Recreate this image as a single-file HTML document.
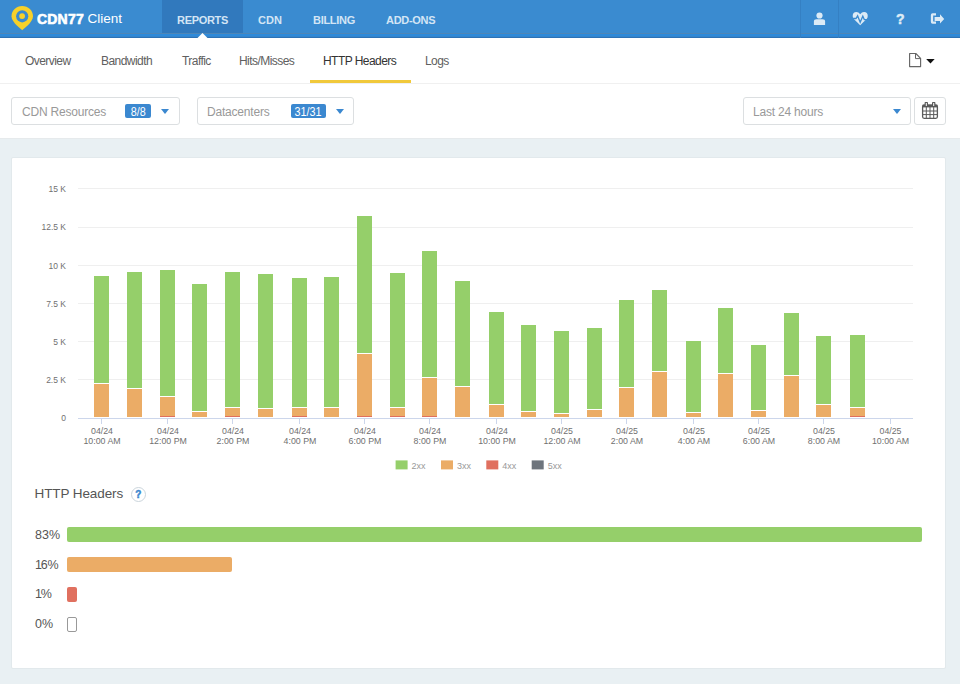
<!DOCTYPE html>
<html><head><meta charset="utf-8">
<style>
*{margin:0;padding:0;box-sizing:border-box}
html,body{width:960px;height:684px;overflow:hidden;background:#e9f0f3;font-family:"Liberation Sans",sans-serif;}
.abs{position:absolute;white-space:nowrap}
#hdr{position:absolute;left:0;top:0;width:960px;height:38px;background:#3a8bd0}
#hdr .l1{position:absolute;left:0;top:33px;width:960px;height:1px;background:#4f86b6}
#hdr .l2{position:absolute;left:0;top:34px;width:960px;height:2px;background:#2e8ada}
#hdr .l3{position:absolute;left:0;top:36px;width:960px;height:1px;background:#3585cc} #hdr .l4{position:absolute;left:0;top:37px;width:960px;height:1px;background:#2c72b6}
.act{position:absolute;left:162px;top:0;width:81px;height:33px;background:#3179bd}
.nav{font-size:11px;font-weight:bold;color:#d3e5f5;letter-spacing:-0.3px;top:13px;line-height:14px}
#sub{position:absolute;left:0;top:38px;width:960px;height:45px;background:#fff}
.tab{font-size:12px;color:#606060;top:54px;line-height:14px;letter-spacing:-0.55px}
#filt{position:absolute;left:0;top:84px;width:960px;height:54px;background:#fff}
.line83{position:absolute;left:0;top:83px;width:960px;height:1px;background:#f0f0f0}
.line138{position:absolute;left:0;top:138px;width:960px;height:1px;background:#e6eaec}
.dd{position:absolute;top:97px;height:28px;border:1px solid #dcdfe1;border-radius:3px;background:#fff}
.ddt{font-size:12px;color:#999;top:105px;line-height:14px;letter-spacing:-0.2px}
.badge{position:absolute;top:104px;height:14px;background:#3b88d0;color:#fff;font-size:12px;line-height:16px;text-align:center;border-radius:2px} .badge span{display:inline-block;transform:scaleX(0.9)}
.caret{position:absolute;width:0;height:0;border-left:4px solid transparent;border-right:4px solid transparent;border-top:5px solid #3b88d0}
#card{position:absolute;left:11px;top:157px;width:935px;height:512px;background:#fff;border:1px solid #e2e9ec;border-radius:2px}
svg text{font-family:"Liberation Sans",sans-serif}
.yl{font-size:8.5px;fill:#707070}
.xl{font-size:8.8px;fill:#707070}
.lg{font-size:9px;fill:#999}
.pct{font-size:12.5px;color:#555;line-height:14px}
.pbar{position:absolute;left:67px;height:15px;border-radius:2px}
</style></head><body>
<div id="hdr"><div class="l1"></div><div class="l2"></div><div class="l3"></div><div class="l4"></div>
<div class="act"></div>
</div>
<svg class="abs" style="left:0;top:0" width="960" height="38">
 <path d="M22.2 6.1 C16.2 6.1 11.5 10.6 11.5 16.6 C11.5 22.5 22.2 30.2 22.2 30.2 C22.2 30.2 33 22.5 33 16.6 C33 10.6 28.2 6.1 22.2 6.1 Z" fill="#f7d12a"/>
 <circle cx="22.2" cy="16.3" r="6.1" fill="#3a8bd0"/>
 <circle cx="22.1" cy="16.1" r="2.9" fill="#f7d12a"/>
 <polygon points="197.5,38 202.5,33 207.5,38" fill="#fff"/>
</svg>
<div class="abs" style="left:37px;top:11px;font-size:14px;font-weight:bold;color:#fff;line-height:16px;-webkit-text-stroke:0.6px #fff;letter-spacing:0.2px">CDN77</div>
<div class="abs" style="left:87.5px;top:11px;font-size:13.5px;color:#fff;line-height:16px">Client</div>
<div class="abs nav" style="left:177px">REPORTS</div>
<div class="abs nav" style="left:258px;letter-spacing:0">CDN</div>
<div class="abs nav" style="left:313px">BILLING</div>
<div class="abs nav" style="left:386px">ADD-ONS</div>

<div id="sub"></div>
<div class="line83"></div>
<div class="abs tab" style="left:25px">Overview</div>
<div class="abs tab" style="left:101px">Bandwidth</div>
<div class="abs tab" style="left:182px">Traffic</div>
<div class="abs tab" style="left:239px">Hits/Misses</div>
<div class="abs tab" style="left:323px;color:#333">HTTP Headers</div>
<div class="abs tab" style="left:425px">Logs</div>
<div class="abs" style="left:310px;top:80px;width:101px;height:3px;background:#f1c93b"></div>

<div id="filt"></div>
<div class="line138"></div>
<div class="dd" style="left:11px;width:169px"></div>
<div class="abs ddt" style="left:22px">CDN Resources</div>
<div class="badge" style="left:125px;width:26px"><span>8/8</span></div>
<div class="caret" style="left:161px;top:109px"></div>
<div class="dd" style="left:197px;width:157px"></div>
<div class="abs ddt" style="left:207px">Datacenters</div>
<div class="badge" style="left:291px;width:35px"><span>31/31</span></div>
<div class="caret" style="left:336px;top:109px"></div>
<div class="dd" style="left:743px;width:168px"></div>
<div class="abs ddt" style="left:753px">Last 24 hours</div>
<div class="caret" style="left:893px;top:109px"></div>
<div class="dd" style="left:914px;width:32px"></div>

<svg class="abs" style="left:0;top:0" width="960" height="140">
 <rect x="800" y="0" width="1" height="38" fill="#3580c3"/>
 <rect x="838" y="0" width="1" height="38" fill="#3580c3"/>
 <circle cx="819.5" cy="15.5" r="3.1" fill="#dcebf6"/>
 <path d="M813.9 25 L813.9 21.5 Q813.9 19.2 816.5 19.2 L822.5 19.2 Q825.1 19.2 825.1 21.5 L825.1 25 Z" fill="#dcebf6"/>
 <path d="M860.2 25.3 L853.8 19 Q852.7 17.8 852.7 16 Q852.7 12.1 856.4 12.1 Q858.6 12.1 860.2 14.3 Q861.8 12.1 864 12.1 Q867.75 12.1 867.75 16 Q867.75 17.8 866.6 19 Z" fill="#dcebf6"/>
 <path d="M850 18.5 L856 18.5 L857.6 15.8 L860.2 22.3 L862.8 16.2 L864.3 19.6 L871 19.6" fill="none" stroke="#3a8bd0" stroke-width="1.3"/>
 <text x="900.2" y="24.2" text-anchor="middle" font-family="Liberation Sans" font-weight="bold" font-size="14" fill="#dcebf6" stroke="#dcebf6" stroke-width="0.5">?</text>
 <path d="M936 14.3 L932.6 14.3 Q932 14.3 932 14.9 L932 22.1 Q932 22.7 932.6 22.7 L936 22.7" fill="none" stroke="#dcebf6" stroke-width="2.3"/>
 <path d="M934.6 17 L940 17 L940 14.2 L944.2 18.9 L940 23.4 L940 20.9 L934.6 20.9 Z" fill="#dcebf6"/>
 <path d="M909.6 53.5 L915.8 53.5 L920.6 58.3 L920.6 66.6 L909.6 66.6 Z" fill="#fff" stroke="#666" stroke-width="1.15" stroke-linejoin="round"/>
 <path d="M915.5 53.6 L915.5 58.6 L920.5 58.6" fill="none" stroke="#666" stroke-width="1"/>
 <polygon points="926.2,59 934.7,59 930.45,63.6" fill="#111"/>
 <g fill="none" stroke="#5a5a5a">
  <rect x="922.6" y="105.2" width="14.8" height="13.1" rx="1.5" stroke-width="1.3"/>
  <line x1="926.3" y1="107" x2="926.3" y2="118" stroke-width="1"/>
  <line x1="930" y1="107" x2="930" y2="118" stroke-width="1"/>
  <line x1="933.7" y1="107" x2="933.7" y2="118" stroke-width="1"/>
  <line x1="923" y1="111" x2="937" y2="111" stroke-width="1"/>
  <line x1="923" y1="114.6" x2="937" y2="114.6" stroke-width="1"/>
 </g>
 <rect x="922.6" y="104.6" width="14.8" height="2.8" fill="#5a5a5a"/>
 <rect x="924.6" y="102" width="3.4" height="4.6" rx="0.8" fill="#5a5a5a"/>
 <rect x="932" y="102" width="3.4" height="4.6" rx="0.8" fill="#5a5a5a"/>
 <rect x="925.8" y="103" width="1" height="3" fill="#fff"/>
 <rect x="933.2" y="103" width="1" height="3" fill="#fff"/>
</svg>
<div id="card"></div>
<svg class="abs" style="left:0;top:0" width="960" height="684">
<rect x="78" y="188" width="835" height="1" fill="#efefef"/>
<rect x="78" y="227" width="835" height="1" fill="#efefef"/>
<rect x="78" y="265" width="835" height="1" fill="#efefef"/>
<rect x="78" y="303" width="835" height="1" fill="#efefef"/>
<rect x="78" y="341" width="835" height="1" fill="#efefef"/>
<rect x="78" y="379" width="835" height="1" fill="#efefef"/>
<text x="66" y="192.1" text-anchor="end" class="yl">15 K</text>
<text x="66" y="230.3" text-anchor="end" class="yl">12.5 K</text>
<text x="66" y="268.5" text-anchor="end" class="yl">10 K</text>
<text x="66" y="306.7" text-anchor="end" class="yl">7.5 K</text>
<text x="66" y="344.9" text-anchor="end" class="yl">5 K</text>
<text x="66" y="383.1" text-anchor="end" class="yl">2.5 K</text>
<text x="66" y="421.3" text-anchor="end" class="yl">0</text>
<rect x="78" y="418" width="835" height="1" fill="#ccd6eb"/>
<rect x="101" y="419" width="1" height="5" fill="#ccd6eb"/>
<text x="102.0" y="433.5" text-anchor="middle" class="xl">04/24</text>
<text x="102.0" y="444" text-anchor="middle" class="xl">10:00 AM</text>
<rect x="167" y="419" width="1" height="5" fill="#ccd6eb"/>
<text x="168.0" y="433.5" text-anchor="middle" class="xl">04/24</text>
<text x="168.0" y="444" text-anchor="middle" class="xl">12:00 PM</text>
<rect x="232" y="419" width="1" height="5" fill="#ccd6eb"/>
<text x="233.0" y="433.5" text-anchor="middle" class="xl">04/24</text>
<text x="233.0" y="444" text-anchor="middle" class="xl">2:00 PM</text>
<rect x="299" y="419" width="1" height="5" fill="#ccd6eb"/>
<text x="300.0" y="433.5" text-anchor="middle" class="xl">04/24</text>
<text x="300.0" y="444" text-anchor="middle" class="xl">4:00 PM</text>
<rect x="364" y="419" width="1" height="5" fill="#ccd6eb"/>
<text x="365.0" y="433.5" text-anchor="middle" class="xl">04/24</text>
<text x="365.0" y="444" text-anchor="middle" class="xl">6:00 PM</text>
<rect x="429" y="419" width="1" height="5" fill="#ccd6eb"/>
<text x="430.0" y="433.5" text-anchor="middle" class="xl">04/24</text>
<text x="430.0" y="444" text-anchor="middle" class="xl">8:00 PM</text>
<rect x="496" y="419" width="1" height="5" fill="#ccd6eb"/>
<text x="497.0" y="433.5" text-anchor="middle" class="xl">04/24</text>
<text x="497.0" y="444" text-anchor="middle" class="xl">10:00 PM</text>
<rect x="561" y="419" width="1" height="5" fill="#ccd6eb"/>
<text x="562.0" y="433.5" text-anchor="middle" class="xl">04/25</text>
<text x="562.0" y="444" text-anchor="middle" class="xl">12:00 AM</text>
<rect x="626" y="419" width="1" height="5" fill="#ccd6eb"/>
<text x="627.0" y="433.5" text-anchor="middle" class="xl">04/25</text>
<text x="627.0" y="444" text-anchor="middle" class="xl">2:00 AM</text>
<rect x="693" y="419" width="1" height="5" fill="#ccd6eb"/>
<text x="694.0" y="433.5" text-anchor="middle" class="xl">04/25</text>
<text x="694.0" y="444" text-anchor="middle" class="xl">4:00 AM</text>
<rect x="758" y="419" width="1" height="5" fill="#ccd6eb"/>
<text x="759.0" y="433.5" text-anchor="middle" class="xl">04/25</text>
<text x="759.0" y="444" text-anchor="middle" class="xl">6:00 AM</text>
<rect x="823" y="419" width="1" height="5" fill="#ccd6eb"/>
<text x="824.0" y="433.5" text-anchor="middle" class="xl">04/25</text>
<text x="824.0" y="444" text-anchor="middle" class="xl">8:00 AM</text>
<rect x="890" y="419" width="1" height="5" fill="#ccd6eb"/>
<text x="890.5" y="433.5" text-anchor="middle" class="xl">04/25</text>
<text x="890.5" y="444" text-anchor="middle" class="xl">10:00 AM</text>
<rect x="395.6" y="460.4" width="12" height="9" fill="#95cf6a"/>
<text x="411.6" y="469" class="lg">2xx</text>
<rect x="441.0" y="460.4" width="12" height="9" fill="#ebac66"/>
<text x="457.0" y="469" class="lg">3xx</text>
<rect x="486.3" y="460.4" width="12" height="9" fill="#e0705f"/>
<text x="502.3" y="469" class="lg">4xx</text>
<rect x="531.7" y="460.4" width="12" height="9" fill="#6d747c"/>
<text x="547.7" y="469" class="lg">5xx</text>
<rect x="94" y="276" width="15" height="107" fill="#95cf6a"/>
<rect x="94" y="384" width="15" height="33" fill="#ebac66"/>
<rect x="127" y="272" width="15" height="116" fill="#95cf6a"/>
<rect x="127" y="389" width="15" height="28" fill="#ebac66"/>
<rect x="160" y="270" width="15" height="126" fill="#95cf6a"/>
<rect x="160" y="397" width="15" height="20" fill="#ebac66"/>
<rect x="160" y="416" width="15" height="1" fill="#e0705f"/>
<rect x="192" y="284" width="15" height="127" fill="#95cf6a"/>
<rect x="192" y="412" width="15" height="5" fill="#ebac66"/>
<rect x="225" y="272" width="15" height="135" fill="#95cf6a"/>
<rect x="225" y="408" width="15" height="9" fill="#ebac66"/>
<rect x="225" y="416" width="15" height="1" fill="#e0705f"/>
<rect x="258" y="274" width="15" height="134" fill="#95cf6a"/>
<rect x="258" y="409" width="15" height="8" fill="#ebac66"/>
<rect x="292" y="278" width="15" height="129" fill="#95cf6a"/>
<rect x="292" y="408" width="15" height="9" fill="#ebac66"/>
<rect x="292" y="416" width="15" height="1" fill="#e0705f"/>
<rect x="324" y="277" width="15" height="130" fill="#95cf6a"/>
<rect x="324" y="408" width="15" height="9" fill="#ebac66"/>
<rect x="357" y="216" width="15" height="137" fill="#95cf6a"/>
<rect x="357" y="354" width="15" height="63" fill="#ebac66"/>
<rect x="357" y="416" width="15" height="1" fill="#e0705f"/>
<rect x="390" y="273" width="15" height="134" fill="#95cf6a"/>
<rect x="390" y="408" width="15" height="9" fill="#ebac66"/>
<rect x="390" y="416" width="15" height="1" fill="#e0705f"/>
<rect x="422" y="251" width="15" height="126" fill="#95cf6a"/>
<rect x="422" y="378" width="15" height="39" fill="#ebac66"/>
<rect x="422" y="416" width="15" height="1" fill="#e0705f"/>
<rect x="455" y="281" width="15" height="105" fill="#95cf6a"/>
<rect x="455" y="387" width="15" height="30" fill="#ebac66"/>
<rect x="489" y="312" width="15" height="92" fill="#95cf6a"/>
<rect x="489" y="405" width="15" height="12" fill="#ebac66"/>
<rect x="521" y="325" width="15" height="86" fill="#95cf6a"/>
<rect x="521" y="412" width="15" height="5" fill="#ebac66"/>
<rect x="554" y="331" width="15" height="82" fill="#95cf6a"/>
<rect x="554" y="414" width="15" height="3" fill="#ebac66"/>
<rect x="587" y="328" width="15" height="81" fill="#95cf6a"/>
<rect x="587" y="410" width="15" height="7" fill="#ebac66"/>
<rect x="619" y="300" width="15" height="87" fill="#95cf6a"/>
<rect x="619" y="388" width="15" height="29" fill="#ebac66"/>
<rect x="652" y="290" width="15" height="81" fill="#95cf6a"/>
<rect x="652" y="372" width="15" height="45" fill="#ebac66"/>
<rect x="686" y="341" width="15" height="71" fill="#95cf6a"/>
<rect x="686" y="413" width="15" height="4" fill="#ebac66"/>
<rect x="718" y="308" width="15" height="65" fill="#95cf6a"/>
<rect x="718" y="374" width="15" height="43" fill="#ebac66"/>
<rect x="751" y="345" width="15" height="65" fill="#95cf6a"/>
<rect x="751" y="411" width="15" height="6" fill="#ebac66"/>
<rect x="784" y="313" width="15" height="62" fill="#95cf6a"/>
<rect x="784" y="376" width="15" height="41" fill="#ebac66"/>
<rect x="816" y="336" width="15" height="68" fill="#95cf6a"/>
<rect x="816" y="405" width="15" height="12" fill="#ebac66"/>
<rect x="850" y="335" width="15" height="72" fill="#95cf6a"/>
<rect x="850" y="408" width="15" height="9" fill="#ebac66"/>
<rect x="850" y="416" width="15" height="1" fill="#e0705f"/>
</svg>
<div class="abs" style="left:34.5px;top:486.5px;font-size:13.5px;color:#555;line-height:14px;letter-spacing:-0.1px">HTTP Headers</div>
<div class="abs" style="left:131px;top:487px;width:15px;height:15px;border:1px solid #cbd5dc;border-radius:50%"></div><svg class="abs" style="left:125px;top:482px" width="27" height="24"><text x="13.2" y="16.3" text-anchor="middle" font-family="Liberation Sans" font-weight="bold" font-size="10" fill="#3b88d0" stroke="#3b88d0" stroke-width="0.5">?</text></svg>
<div class="abs pct" style="left:35px;top:528px">83%</div>
<div class="abs pct" style="left:35px;top:558px"><span style="letter-spacing:-1.3px">1</span>6%</div>
<div class="abs pct" style="left:35px;top:587px"><span style="letter-spacing:-1.3px">1</span>%</div>
<div class="abs pct" style="left:35px;top:617px">0%</div>
<div class="pbar" style="top:527px;width:855px;background:#95cf6a"></div>
<div class="pbar" style="top:557px;width:165px;background:#ebac66"></div>
<div class="pbar" style="top:587px;width:10px;background:#e0705f"></div>
<div class="pbar" style="top:617px;width:10px;border:1px solid #999;background:#fff"></div>
</body></html>
